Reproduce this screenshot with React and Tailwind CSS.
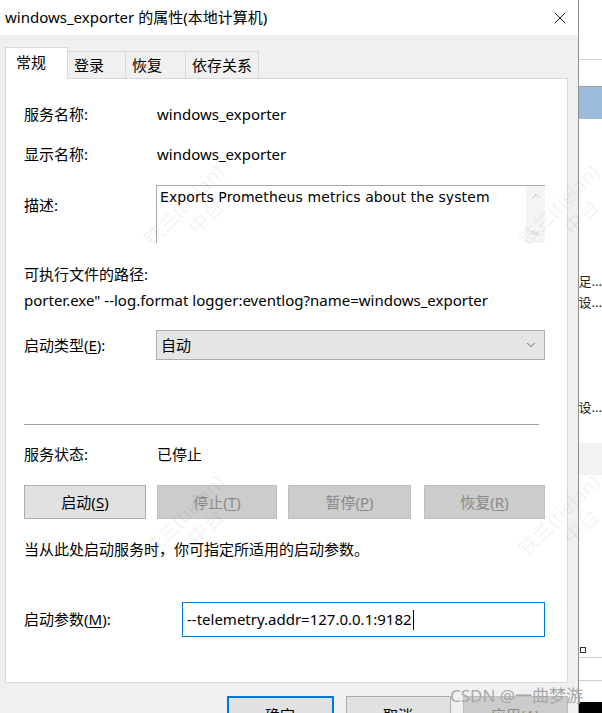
import { X, ChevronDown, ChevronUp } from "lucide-react";

const font = "font-['Noto_Sans','Noto_Sans_CJK_SC',sans-serif]";

const Key = ({ children }) => <span className="underline underline-offset-2">{children}</span>;

const Tab = ({ label, active, w }) =>
  active ? (
    <div className={`${w} h-[32px] -mb-px bg-white border border-b-0 border-[#d9d9d9] flex items-start pl-[10px] pt-[3px] relative z-10`}>
      {label}
    </div>
  ) : (
    <div className={`${w} h-[27px] mt-[4px] bg-[#f0f0f0] border border-l-0 border-b-0 border-[#d9d9d9] flex items-center pl-[6px]`}>
      {label}
    </div>
  );

const Btn = ({ children, disabled, w = "w-[122px]" }) => (
  <div
    className={`${w} h-[34px] flex items-center justify-center border ${
      disabled ? "bg-[#cccccc] border-[#bfbfbf] text-[#8a8a8a]" : "bg-[#e1e1e1] border-[#adadad] text-black"
    }`}
  >
    {children}
  </div>
);

const Watermark = ({ className }) => (
  <div className={`absolute pointer-events-none whitespace-nowrap text-[#000]/[0.06] text-[20px] leading-[24px] -rotate-45 ${className}`}>
    <div>铁兰(tielan)</div>
    <div className="pl-[40px]">中台</div>
  </div>
);

export default function App() {
  return (
    <div className={`w-[602px] h-[713px] relative overflow-hidden flex bg-white text-[15px] text-black ${font}`}>
      {/* dialog */}
      <div className="w-[583px] h-full flex flex-col border-r border-[#8f8f8f]">
        <div className="h-[35px] shrink-0 bg-white flex items-center justify-between pl-[5px] pr-[8px]">
          <span>windows_exporter 的属性(本地计算机)</span>
          <X size={20} strokeWidth={1.2} className="text-[#222]" />
        </div>
        <div className="flex-1 min-h-0 overflow-hidden bg-[#f0f0f0] pl-[5px] pr-[10px] pt-[12px]">
          <div className="flex">
            <Tab label="常规" active w="w-[63px]" />
            <Tab label="登录" w="w-[58px]" />
            <Tab label="恢复" w="w-[60px]" />
            <Tab label="依存关系" w="w-[73px]" />
          </div>
          <div className="h-[605px] bg-white border border-[#d9d9d9] pl-[18px] flex flex-col">
            <div className="mt-[25px] h-[20px] flex items-center">
              <span className="w-[133px]">服务名称:</span>
              <span>windows_exporter</span>
            </div>
            <div className="mt-[20px] h-[20px] flex items-center">
              <span className="w-[133px]">显示名称:</span>
              <span>windows_exporter</span>
            </div>
            <div className="mt-[21px] h-[58px] flex items-start">
              <span className="w-[132px] mt-[9px]">描述:</span>
              <div className="w-[389px] h-[58px] border-t border-l border-[#a9a9a9] flex">
                <div className="flex-1 pl-[3px] pt-[1px] font-['DejaVu_Sans',sans-serif] text-[14px] tracking-[0.1px]">
                  Exports Prometheus metrics about the system
                </div>
                <div className="w-[19px] bg-[#f4f4f4] flex flex-col items-center justify-between py-[4px] text-[#b5b5b5]">
                  <ChevronUp size={12} strokeWidth={1.6} />
                  <ChevronDown size={12} strokeWidth={1.6} />
                </div>
              </div>
            </div>
            <div className="mt-[21px] h-[20px] flex items-center">可执行文件的路径:</div>
            <div className="mt-[6px] h-[20px] flex items-center whitespace-nowrap">
              porter.exe" --log.format logger:eventlog?name=windows_exporter
            </div>
            <div className="mt-[20px] h-[30px] flex items-center">
              <span className="w-[132px]">
                启动类型(<Key>E</Key>):
              </span>
              <div className="w-[389px] h-[30px] bg-[#e5e5e5] border border-[#adadad] flex items-center justify-between pl-[4px] pr-[6px]">
                <span>自动</span>
                <ChevronDown size={14} strokeWidth={1.4} className="text-[#555]" />
              </div>
            </div>
            <div className="mt-[64px] w-[515px] h-px bg-[#a0a0a0]" />
            <div className="mt-[19px] h-[20px] flex items-center">
              <span className="w-[133px]">服务状态:</span>
              <span>已停止</span>
            </div>
            <div className="mt-[21px] flex gap-[11px]">
              <Btn>
                启动(<Key>S</Key>)
              </Btn>
              <Btn disabled w="w-[120px]">
                停止(<Key>T</Key>)
              </Btn>
              <Btn disabled w="w-[123px]">
                暂停(<Key>P</Key>)
              </Btn>
              <div className="ml-[2px]">
                <Btn disabled w="w-[121px]">
                  恢复(<Key>R</Key>)
                </Btn>
              </div>
            </div>
            <div className="mt-[20px] h-[20px] flex items-center">当从此处启动服务时，你可指定所适用的启动参数。</div>
            <div className="mt-[43px] h-[35px] flex items-center">
              <span className="w-[158px]">
                启动参数(<Key>M</Key>):
              </span>
              <div className="w-[363px] h-[35px] border border-[#0078d7] flex items-center pl-[4px]">
                <span>--telemetry.addr=127.0.0.1:9182</span>
                <span className="w-px h-[20px] bg-black ml-[1px]" />
              </div>
            </div>
          </div>
          <div className="mt-[13px] flex justify-end gap-[12px]">
            <div className="w-[107px] h-[30px] bg-[#e1e1e1] border-2 border-[#0078d7] flex justify-center pt-[6px]">确定</div>
            <div className="w-[105px] h-[30px] bg-[#e1e1e1] border border-[#adadad] flex justify-center pt-[7px]">取消</div>
            <div className="w-[105px] h-[30px] bg-[#cccccc] border border-[#bfbfbf] text-[#8a8a8a] flex justify-center pt-[7px]">
              应用(<Key>A</Key>)
            </div>
          </div>
        </div>
      </div>

      {/* window behind */}
      <div className="flex-1 flex flex-col bg-white text-[13px] leading-none">
        <div className="h-[60px] shrink-0 border-b border-[#d0d0d0]" />
        <div className="h-[27px] shrink-0 border-b border-[#a0a0a0]" />
        <div className="h-[32px] shrink-0 bg-[#9dbbdc]" />
        <div className="h-[152px] shrink-0" />
        <div className="h-[20px] shrink-0 flex items-center text-[#222]">足...</div>
        <div className="h-[22px] shrink-0 flex items-center text-[#222]">设...</div>
        <div className="h-[84px] shrink-0" />
        <div className="h-[20px] shrink-0 flex items-center text-[#222]">设...</div>
        <div className="h-[26px] shrink-0" />
        <div className="h-[32px] shrink-0 bg-[#f2f2f2]" />
        <div className="h-[168px] shrink-0" />
        <div className="h-[14px] shrink-0 flex items-center pl-[1px]">
          <div className="w-[6px] h-[6px] border border-[#333]" />
        </div>
        <div className="h-[24px] shrink-0 border-t border-[#d0d0d0] border-b" />
        <div className="flex-1 flex flex-col justify-end">
          <div className="h-[11px] bg-black" />
        </div>
      </div>

      {/* watermarks */}
      <Watermark className="left-[140px] top-[190px]" />
      <Watermark className="left-[515px] top-[190px]" />
      <Watermark className="left-[140px] top-[500px]" />
      <Watermark className="left-[515px] top-[500px]" />
      <div className="absolute left-[450px] top-[683px] text-[17px] text-[#a8a8a8] pointer-events-none whitespace-nowrap">
        CSDN @一曲梦游
      </div>
    </div>
  );
}
